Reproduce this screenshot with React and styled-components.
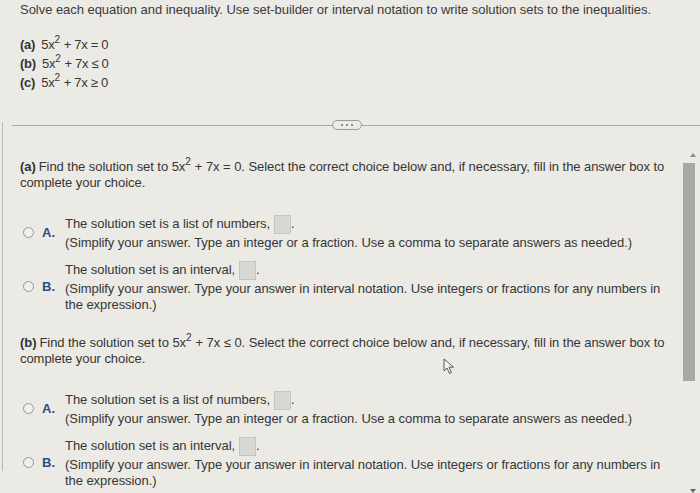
import React from "react";
import styled, { createGlobalStyle } from "styled-components";

const Global = createGlobalStyle`
  html, body { margin: 0; padding: 0; background: #ebeae4; }
  body { font-family: "Liberation Sans", Arial, sans-serif; color: #363636; }
`;

const Page = styled.div`
  position: relative;
  width: 700px;
  height: 493px;
  overflow: hidden;
  background: #ebeae4;
  display: flex;
  flex-direction: column;
`;

const Header = styled.div`
  padding: 2px 20px 0 20px;
`;

const Title = styled.div`
  font-size: 13px;
  line-height: 16px;
  letter-spacing: -0.04px;
  color: #3a3a3a;
  white-space: nowrap;
`;

const EqList = styled.div`
  margin-top: 17px;
  display: flex;
  flex-direction: column;
`;

const Eq = styled.div`
  font-size: 13px;
  line-height: 19px;
  letter-spacing: -0.3px;
  color: #363636;
  white-space: nowrap;
`;

const Tag = styled.b`
  font-weight: bold;
  color: #333;
  margin-right: 3px;
`;

const Sup = styled.sup`
  font-size: 10px;
  line-height: 0;
  vertical-align: 6px;
  margin-right: 4px;
`;

const Divider = styled.div`
  margin: 28px 0 0 12px;
  height: 10px;
  display: flex;
  align-items: center;
`;

const Rule = styled.div`
  flex: ${(p) => (p.$grow ? 1 : "none")};
  width: ${(p) => (p.$grow ? "auto" : "320px")};
  height: 1px;
  background: #a9aaa6;
`;

const Pill = styled.div`
  width: 28px;
  height: 8px;
  border: 1px solid #9a9c98;
  border-radius: 5px;
  display: flex;
  align-items: center;
  justify-content: center;
  gap: 3px;
  background: #ecebe5;
`;

const Dot = styled.span`
  width: 2px;
  height: 2px;
  border-radius: 50%;
  background: #6d6f6c;
`;

const Body = styled.div`
  flex: 1;
  display: flex;
  min-height: 0;
`;

const EdgeLine = styled.div`
  width: 1px;
  margin: -8px 0 22px 2px;
  background: #b8b9b4;
`;

const Content = styled.div`
  flex: 1;
  padding: 29px 0 0 17px;
  display: flex;
  flex-direction: column;
  gap: 22px;
`;

const Part = styled.div`
  display: flex;
  flex-direction: column;
  gap: 22px;
`;

const Prompt = styled.div`
  font-size: 13px;
  line-height: 16px;
  letter-spacing: -0.06px;
  color: #363636;
`;

const Line = styled.div`
  white-space: nowrap;
`;

const Options = styled.div`
  display: flex;
  flex-direction: column;
  gap: 8px;
`;

const Option = styled.div`
  display: flex;
  align-items: center;
  padding-left: 3px;
`;

const Radio = styled.span`
  box-sizing: border-box;
  width: 11px;
  height: 11px;
  border: 1.5px solid #8896ab;
  border-radius: 50%;
  background: #f0f0ec;
  flex: none;
`;

const Letter = styled.span`
  font-size: 13px;
  font-weight: bold;
  color: #2f4d8a;
  width: 23px;
  margin-left: 8px;
  flex: none;
`;

const OptText = styled.div`
  font-size: 13px;
  line-height: 16px;
  letter-spacing: -0.06px;
  color: #363636;
`;

const FirstLine = styled.div`
  white-space: nowrap;
  height: 22px;
  display: flex;
  align-items: center;
`;

const AnswerBox = styled.span`
  display: inline-block;
  width: 15px;
  height: 17px;
  margin-left: 4px;
  background: #d6d9d4;
  border: 1px solid #c2c6c1;
`;

const Scrollbar = styled.div`
  width: 18px;
  flex: none;
  display: flex;
  flex-direction: column;
  align-items: center;
  padding-top: 23px;
`;

const Arrow = styled.div`
  width: 0;
  height: 0;
  border-left: 3px solid transparent;
  border-right: 3px solid transparent;
  ${(p) =>
    p.$down
      ? "border-top: 4px solid #666;"
      : "border-bottom: 4px solid #8e8e8a;"}
  margin-left: 4px;
`;

const Track = styled.div`
  flex: 1;
  width: 100%;
  padding: 6px 0 0 1px;
  display: flex;
  flex-direction: column;
`;

const Thumb = styled.div`
  width: 12px;
  height: 218px;
  background: #a8a8a4;
`;

const Cursor = styled.svg`
  position: absolute;
  left: 443px;
  top: 358px;
`;

function X2() {
  return (
    <>
      5x<Sup>2</Sup>+ 7x
    </>
  );
}

function ListOption() {
  return (
    <Option>
      <Radio />
      <Letter>A.</Letter>
      <OptText>
        <FirstLine>
          The solution set is a list of numbers, <AnswerBox />.
        </FirstLine>
        <Line>
          (Simplify your answer. Type an integer or a fraction. Use a comma to separate answers as needed.)
        </Line>
      </OptText>
    </Option>
  );
}

function IntervalOption() {
  return (
    <Option>
      <Radio />
      <Letter>B.</Letter>
      <OptText>
        <FirstLine>
          The solution set is an interval, <AnswerBox />.
        </FirstLine>
        <Line>
          (Simplify your answer. Type your answer in interval notation. Use integers or fractions for any numbers in
        </Line>
        <Line>the expression.)</Line>
      </OptText>
    </Option>
  );
}

function QuestionPart({ tag, rel }) {
  return (
    <Part>
      <Prompt>
        <Line>
          <Tag>({tag})</Tag>Find the solution set to <X2 /> {rel} 0. Select the correct choice below and, if necessary, fill in the answer box to
        </Line>
        <Line>complete your choice.</Line>
      </Prompt>
      <Options>
        <ListOption />
        <IntervalOption />
      </Options>
    </Part>
  );
}

export default function App() {
  return (
    <>
      <Global />
      <Page>
        <Header>
          <Title>
            Solve each equation and inequality. Use set-builder or interval notation to write solution sets to the inequalities.
          </Title>
          <EqList>
            <Eq>
              <Tag>(a)</Tag> <X2 /> = 0
            </Eq>
            <Eq>
              <Tag>(b)</Tag> <X2 /> ≤ 0
            </Eq>
            <Eq>
              <Tag>(c)</Tag> <X2 /> ≥ 0
            </Eq>
          </EqList>
        </Header>
        <Divider>
          <Rule />
          <Pill>
            <Dot />
            <Dot />
            <Dot />
          </Pill>
          <Rule $grow />
        </Divider>
        <Body>
          <EdgeLine />
          <Content>
            <QuestionPart tag="a" rel="=" />
            <QuestionPart tag="b" rel="≤" />
          </Content>
          <Scrollbar>
            <Arrow />
            <Track>
              <Thumb />
            </Track>
            <Arrow $down />
          </Scrollbar>
        </Body>
        <Cursor width="12" height="17" viewBox="0 0 12 17">
          <path
            d="M1 1 L1 13 L4 10 L6.5 15.5 L8.5 14.6 L6 9.2 L10.5 9.2 Z"
            fill="#f4f4f0"
            stroke="#555"
            strokeWidth="1"
            strokeLinejoin="round"
          />
        </Cursor>
      </Page>
    </>
  );
}
